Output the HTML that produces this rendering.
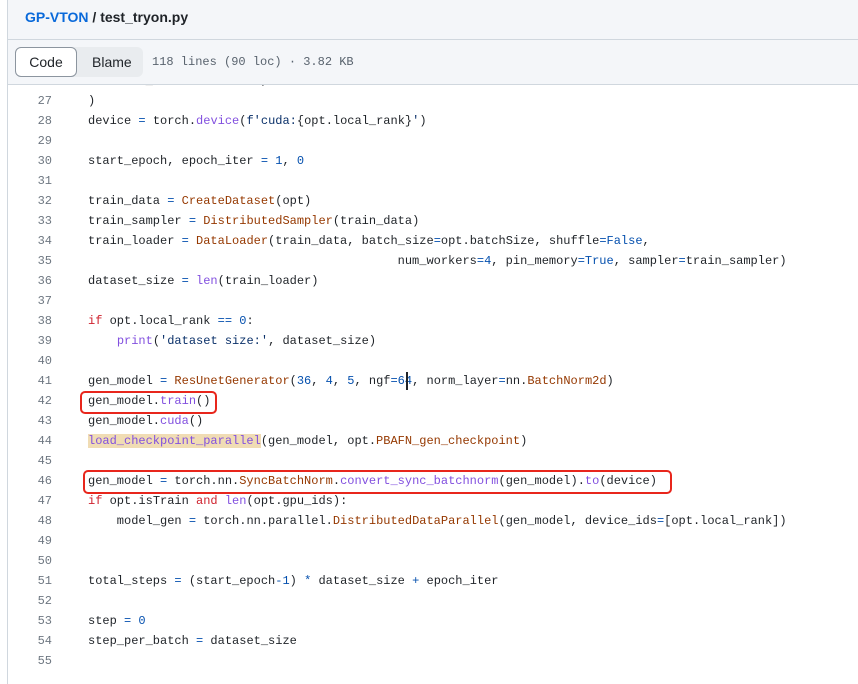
<!DOCTYPE html>
<html><head><meta charset="utf-8"><style>
body{margin:0;width:858px;height:667px;overflow:hidden;background:#fff;font-family:"Liberation Sans",sans-serif;position:relative}
.hdr{position:absolute;left:7px;top:0;width:860px;height:84px;background:#f4f6f9;border-left:1px solid #d0d7de}
.b1{position:absolute;left:7px;top:39px;width:860px;height:1px;background:#d0d7de}
.b2{position:absolute;left:7px;top:84px;width:860px;height:1px;background:#d0d7de}
.lb{position:absolute;left:7px;top:84px;width:1px;height:600px;background:#d0d7de}
.title{position:absolute;left:25px;top:9px;font-size:14px;font-weight:bold;color:#1f2328}
.title a{color:#0969da;text-decoration:none}
.seg{position:absolute;left:15px;top:47px;width:128px;height:30px;background:#e9ecef;border-radius:6px}
.code-btn{position:absolute;left:15px;top:47px;width:60px;height:28px;border:1px solid #8c959f;border-radius:6px;background:#fff;font-size:14px;line-height:28px;text-align:center;color:#1f2328}
.blame{position:absolute;left:92px;top:47px;font-size:14px;line-height:30px;color:#1f2328}
.meta{position:absolute;left:152px;top:47px;font-family:"Liberation Mono",monospace;font-size:12px;line-height:30px;color:#59636e}
.code{position:absolute;left:0;top:71px;font-family:"Liberation Mono",monospace;font-size:12px;line-height:20px;color:#1f2328;white-space:pre}
.ln{display:inline-block;width:52px;text-align:right;color:#6e7781;margin-right:36px}
.n{color:#0550ae}.f{color:#8250df}.c{color:#953800}.k{color:#cf222e}.s{color:#0a3069}
.hl{background:#f0dcb4}
.box{position:absolute;border:2px solid #e8261c;border-radius:5px}
</style></head><body>
<div class="hdr"></div><div class="b1"></div><div class="b2"></div><div class="lb"></div>
<div class="title"><a>GP-VTON</a> / test_tryon.py</div>
<div class="seg"></div><div class="code-btn">Code</div><div class="blame">Blame</div>
<div class="meta">118 lines (90 loc) · 3.82 KB</div>
<div class="code" style="clip-path:inset(14px 0 0 0)"><span class="ln">26</span>    init_method<span class="n">=</span><span class="s">'env://'</span>,
<span class="ln">27</span>)
<span class="ln">28</span>device <span class="n">=</span> torch.<span class="f">device</span>(<span class="s">f'cuda:</span>{opt.local_rank}<span class="s">'</span>)
<span class="ln">29</span>
<span class="ln">30</span>start_epoch, epoch_iter <span class="n">=</span> <span class="n">1</span>, <span class="n">0</span>
<span class="ln">31</span>
<span class="ln">32</span>train_data <span class="n">=</span> <span class="c">CreateDataset</span>(opt)
<span class="ln">33</span>train_sampler <span class="n">=</span> <span class="c">DistributedSampler</span>(train_data)
<span class="ln">34</span>train_loader <span class="n">=</span> <span class="c">DataLoader</span>(train_data, batch_size<span class="n">=</span>opt.batchSize, shuffle<span class="n">=False</span>,
<span class="ln">35</span>                                           num_workers<span class="n">=4</span>, pin_memory<span class="n">=True</span>, sampler<span class="n">=</span>train_sampler)
<span class="ln">36</span>dataset_size <span class="n">=</span> <span class="f">len</span>(train_loader)
<span class="ln">37</span>
<span class="ln">38</span><span class="k">if</span> opt.local_rank <span class="n">==</span> <span class="n">0</span>:
<span class="ln">39</span>    <span class="f">print</span>(<span class="s">'dataset size:'</span>, dataset_size)
<span class="ln">40</span>
<span class="ln">41</span>gen_model <span class="n">=</span> <span class="c">ResUnetGenerator</span>(<span class="n">36</span>, <span class="n">4</span>, <span class="n">5</span>, ngf<span class="n">=64</span>, norm_layer<span class="n">=</span>nn.<span class="c">BatchNorm2d</span>)
<span class="ln">42</span>gen_model.<span class="f">train</span>()
<span class="ln">43</span>gen_model.<span class="f">cuda</span>()
<span class="ln">44</span><span class="f hl">load_checkpoint_parallel</span>(gen_model, opt.<span class="c">PBAFN_gen_checkpoint</span>)
<span class="ln">45</span>
<span class="ln">46</span>gen_model <span class="n">=</span> torch.nn.<span class="c">SyncBatchNorm</span>.<span class="f">convert_sync_batchnorm</span>(gen_model).<span class="f">to</span>(device)
<span class="ln">47</span><span class="k">if</span> opt.isTrain <span class="k">and</span> <span class="f">len</span>(opt.gpu_ids):
<span class="ln">48</span>    model_gen <span class="n">=</span> torch.nn.parallel.<span class="c">DistributedDataParallel</span>(gen_model, device_ids<span class="n">=</span>[opt.local_rank])
<span class="ln">49</span>
<span class="ln">50</span>
<span class="ln">51</span>total_steps <span class="n">=</span> (start_epoch<span class="n">-1</span>) <span class="n">*</span> dataset_size <span class="n">+</span> epoch_iter
<span class="ln">52</span>
<span class="ln">53</span>step <span class="n">=</span> <span class="n">0</span>
<span class="ln">54</span>step_per_batch <span class="n">=</span> dataset_size
<span class="ln">55</span>
</div>
<div style="position:absolute;left:406px;top:372px;width:2px;height:18px;background:#1f2328"></div>
<div class="box" style="left:80px;top:391px;width:133px;height:19px"></div>
<div class="box" style="left:83px;top:470px;width:585px;height:20px"></div>
</body></html>
